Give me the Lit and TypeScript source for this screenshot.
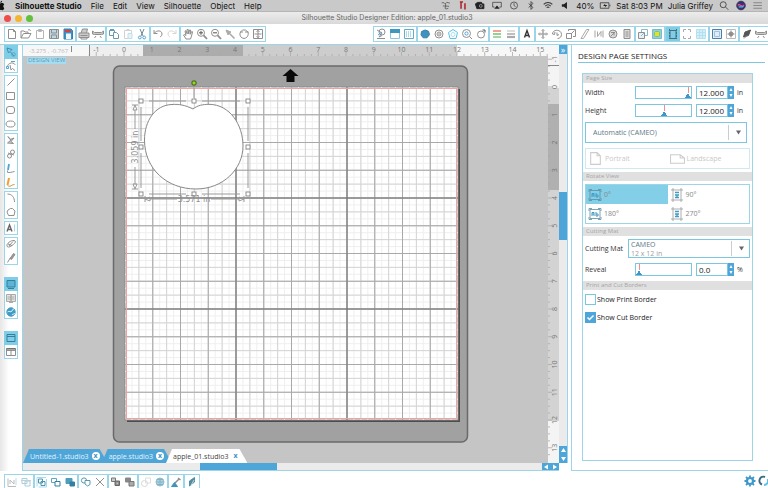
import { LitElement, html, svg, css } from "lit";
import { customElement, property } from "lit/decorators.js";
import { classMap } from "lit/directives/class-map.js";

const G = "#8f8f8f";
const B = "#4fa5d6";
const L = "#a9d9ec";

/* Every glyph is drawn on a 14 x 14 grid. */
const glyphs: Record<string, unknown> = {
  page: svg`<path d="M3.5 2.5h5l2 2v7h-7z M8.5 2.5v2h2"/>`,
  open: svg`<path d="M2 11V4h3l1 1h3v1.500M2 11l2.500-4.500H12L9.500 11z M9 3c1.500-1 2.500 0 2.500 1"/>`,
  blank: svg`<path d="M3.500 3.500h7v8h-7z M5.500 2.500h3v2h-3z" stroke="#b5b5b5"/>`,
  save: svg`<path d="M2.500 2.500h9v9h-9z" fill="#bcd8e4"/><path d="M4.500 2.500v3.500h5V2.500M4.500 11.500V8h5v3.500"/>`,
  sdcard: svg`<path d="M3 2h7l1.500 1.500V12H3z" fill="#3f8fc0" stroke="#3a7ea8"/><path d="M4 3h5.500v2H4z" fill="#e03a3a" stroke="none"/><path d="M5 6.500h5V12H5z" fill="#eef6fa" stroke="none"/>`,
  print: svg`<path d="M4 6l1.500-4h5L9.500 6M2 6h10v4.500H2z" fill="#ccc"/><path d="M3.500 8.500h7M4 10.500v1.500h6v-1.500"/>`,
  cutter: svg`<path d="M1.500 4l2 1.500h7l2-1.500v3l-2 .5h-7l-2-.5z" fill="#ccc"/><path d="M5 9l-1.500 2M9 9l1.500 2"/>`,
  copy: svg`<path d="M2.500 3.500h5v5h-5z" stroke="#6b98ad"/><path d="M6.500 5.500h3l2 2v4h-5z" fill="#fff" stroke="#6b98ad"/><path d="M3 2.500h4" stroke="${B}"/>`,
  paste: svg`<path d="M3.500 3.500h7v8h-7z M5.500 2.500h3" stroke="#d2d2d2"/><path d="M7 6.500h4v5H7z" fill="#e6f3f8" stroke="#c0dfe9"/>`,
  cut: svg`<path d="M5 2l3 7M9 2L6 9" stroke="#6f8793"/><circle cx="4.800" cy="10.500" r="1.400" stroke="${B}"/><circle cx="9.200" cy="10.500" r="1.400" stroke="${B}"/>`,
  undo: svg`<path d="M3 3v3.500h3.500M3 6.500c3-4 8-3 8 .5 0 1.500-1 2.500-2 3"/>`,
  redo: svg`<path d="M11 3v3.500H7.500M11 6.500C8 2.500 3 3.500 3 7c0 1.500 1 2.500 2 3" stroke="#d8d8d8"/>`,
  hand: svg`<path d="M5 12L2.500 8l1-.5L5 8.500 4 4l1-.3L6.200 7 6 2.500h1.200L7.700 7 8.500 3h1L9.300 7.300l1.500-3 .8.500L10.500 9 9.500 12z"/>`,
  zoomin: svg`<circle cx="6" cy="5.800" r="3.500"/><path d="M8.600 8.400L12 12" stroke-width="1.800"/><path d="M4 5.800h4M6 3.800v4" stroke="#555"/>`,
  zoomout: svg`<circle cx="6" cy="5.800" r="3.500"/><path d="M8.600 8.400L12 12" stroke-width="1.800"/><path d="M4 5.800h4" stroke="#555"/>`,
  zoomsel: svg`<path d="M3 3l2 5 1-2 2-1z" fill="#aaa" stroke="#aaa"/><path d="M6 6l5.500 5.500" stroke-width="1.600" stroke="#aaa"/>`,
  zoomdrag: svg`<path d="M7 11.500C4 11 2.500 9 3 6l1-1.500L5.500 3h3L11 5c.8 3-.5 6-4 6.500z M3 5h3M8 5h3.500"/>`,
  fit: svg`<path d="M2.500 2.500h9v9h-9z"/><path d="M7 3.500v7M3.500 7h7M5.500 4.500L7 3.500l1.500 1M5.500 9.500L7 10.500l1.500-1"/>`,
  lamp: svg`<circle cx="8" cy="5" r="3"/><path d="M3 3l5 3-3 4M3 11.500h8M5 10l3-1.500"/><path d="M4 8l4-3" stroke="${B}"/>`,
  window: svg`<path d="M2.500 2.500h9v9h-9z" stroke="#8ec6de"/><path d="M2 2h10v4H2z" fill="#3f97bd" stroke="none"/>`,
  dots: svg`<path d="M2.500 2.500h9v9h-9z" stroke="#63acc9"/><path d="M4 5h6M4 7h6M4 9h6" stroke="#63b4d6" stroke-dasharray="1 1"/>`,
  poly: svg`<path d="M7 3l3.500 1.200 1 3.500L9 10.800H5.200L3 8l.5-3.500z" fill="#3f94bf" stroke="#3a82a6"/>`,
  spiral: svg`<circle cx="7" cy="7" r="4"/><circle cx="7" cy="7" r="2"/><path d="M6 7h2"/>`,
  star: svg`<path d="M7 2.500l4.500 3-1.500 6H4l-1.500-6z" stroke="#5cc2e6"/><circle cx="7" cy="7.500" r="2" stroke="#a7dff2"/>`,
  zoomq: svg`<circle cx="6.500" cy="6.500" r="4"/><circle cx="6.500" cy="6.500" r="1.600" stroke="${B}"/><path d="M9.500 9.500l2.500 2.500"/>`,
  ring: svg`<circle cx="7" cy="7.500" r="3.500"/><path d="M8.500 3h2.500v2.500" stroke="#555"/>`,
  lines: svg`<path d="M3 4h8" stroke="#ef8a7c" stroke-width="1.600"/><path d="M3 7h8" stroke="#7cc576" stroke-width="1.600"/><path d="M3 10h8" stroke="#8fd08a" stroke-width="1.600"/>`,
  weights: svg`<path d="M3 4h8" stroke="#bbb"/><path d="M3 7h8" stroke="#aaa" stroke-width="1.500"/><path d="M3 10h8" stroke="#aaa" stroke-width="2.200"/>`,
  letter: svg`<path d="M4.500 10.500l2.500-7 2.500 7M5.500 8.500h3" stroke="#333" stroke-width="1.400"/>`,
  move: svg`<path d="M7 2.500v9M2.500 7h9" stroke="#a8a8a8" stroke-width="1.600"/><path d="M5.500 4L7 2.500 8.500 4M5.500 10L7 11.500 8.500 10M4 5.500L2.500 7 4 8.500M10 5.500L11.500 7 10 8.500" stroke="#a8a8a8"/>`,
  rotate: svg`<path d="M2.500 7c0-5 9-5 9 .5 0 2-1.500 4-4 4M2.500 7l2 .5L5 5M7 5.500v3l2-1"/>`,
  scale: svg`<path d="M2.500 6.500h5v5h-5z M4.500 4V2.500h7v7H9M7 7l3.500-3.500"/>`,
  shear: svg`<path d="M3 11.500L8.500 2.500H11L5.500 11.500z" stroke="#aaa"/>`,
  align: svg`<path d="M3 3.500v7M11 3.500v7M5.500 4.500v5l3.500-5v5" stroke="#a5a5a5"/>`,
  replicate: svg`<circle cx="7" cy="7" r="4" fill="#ddd"/><path d="M4.500 9.500l5-5M5 5.500h3v3"/>`,
  nest: svg`<path d="M4 2.500h6v9H4z" fill="#ddd"/><path d="M5.500 5h3M5.500 7h3M5.500 9h3"/>`,
  modify: svg`<path d="M2.500 5.500h6v6h-6z" fill="#e6f1f5"/><path d="M5.500 5V2.500h6v6H9M5 9l4-4" stroke="#8fb7c7"/>`,
  trace: svg`<path d="M2.500 2.500h9v9h-9z" fill="#8fd0e6" stroke="#7bb9ce"/><rect x="4.500" y="4.500" width="5" height="5" rx="1" fill="#e2e22c" stroke="#7cc576"/>`,
  pagecfg: svg`<path d="M4 3.500h6v8H4z" stroke="#47707f"/><path d="M3.500 2v10M10.500 2v10" stroke="#47707f" stroke-dasharray="2 1"/>`,
  reg: svg`<path d="M3.500 5V2.500H6M8 2.500h2.500V5M10.500 9v2.500H8M6 11.500H3.500V9" stroke="#aaa"/>`,
  gridic: svg`<path d="M2.500 2.500h9v9h-9z" fill="#d2eef8" stroke="#b4e0f0"/><path d="M5.500 2.500v9M8.500 2.500v9M2.500 5.500h9M2.500 8.500h9" stroke="#b4e0f0"/>`,
  media: svg`<path d="M2.500 2.500h9v9h-9z" fill="#dfeef8" stroke="#4d7da8"/><path d="M4.500 4.500h5v5h-5z" stroke="#9fc2dc"/>`,
  target: svg`<path d="M2.500 2.500h9v9h-9z" stroke="#bbb"/><circle cx="7" cy="7" r="2" fill="#888"/><path d="M7 3.500v7M3.500 7h7"/>`,
  knife: svg`<path d="M3.500 10l1.500-5 5.500-2-2 5.500z" fill="#555" stroke="#555"/><path d="M4 11.500l3-3"/>`,
  select: svg`<path d="M3 3l1.500 5 1.500-1.500L10 11M3 3l5 1.500L6.500 6" stroke="#3f8fae"/><circle cx="9.500" cy="9.500" r="1.800" stroke="#5aa6c4"/>`,
  nodes: svg`<path d="M3.500 8C3.500 3 11 3 11 6M6 6l1 5 1.500-1.500L11 11.500"/><path d="M2.500 7.500h2v2h-2z" fill="#fff" stroke="${B}"/><path d="M7 2.500h4" stroke="${B}"/>`,
  line: svg`<path d="M3.500 10.500l7-7"/>`,
  rect: svg`<path d="M2.500 3.500h8v7h-8z"/>`,
  rrect: svg`<rect x="2.500" y="3.500" width="8" height="7" rx="2.500"/>`,
  oval: svg`<ellipse cx="6.500" cy="7" rx="4.500" ry="3"/>`,
  polygon: svg`<path d="M4 3.500l2 3 4-1.500-3 3.500 2.500 2-6-.5L7 7z" fill="#ccc"/>`,
  curve: svg`<circle cx="8.500" cy="5" r="2"/><circle cx="5.500" cy="9" r="2"/><path d="M4 6l6 2"/>`,
  pen: svg`<path d="M4 9L5 3" stroke="${B}" stroke-width="1.800"/><path d="M3.500 9.500v1.800c2 .7 4.500-.3 7-.8"/>`,
  brush: svg`<path d="M3.500 10L5 3" stroke="#f0a030" stroke-width="2"/><path d="M3.500 10.500c3 2 4-1 7-1" stroke="#c98a3a"/>`,
  arc: svg`<path d="M3.500 3C8 3 10.500 6.500 10.500 11"/>`,
  penta: svg`<path d="M6.500 3.500h2L11 6l-1 4.500H4.500L3 7l1-2z"/>`,
  textic: svg`<path d="M3 10.500L5.500 4l2.500 6.500M4 8.500h3" stroke="#666" stroke-width="1.400"/><path d="M10.500 3.500v7" stroke="${L}"/>`,
  eraser: svg`<path d="M3 9c-1-2 4-6 7-5.500s1 3-2 5-4.500 2-5 .5z M5 9l4-4.500M4 7l4 1.500"/>`,
  blade: svg`<path d="M3.500 11.500l3-5"/><path d="M6 7.500L9.500 2.500 11 3.500 7.500 8.500z" fill="#999"/>`,
  design: svg`<path d="M3 3.500h8v6.500H3z" fill="#5db4d6" stroke="#357f9d"/><path d="M4 11.500h6" stroke="#357f9d"/>`,
  book: svg`<path d="M2.500 3.500H7v7H2.500z M7 3.500h4.500v7H7z" fill="#e4e4e4" stroke="#aaa"/><path d="M5 11.500h4M3.500 6h7M3.500 8h7" stroke="#aaa"/>`,
  store: svg`<circle cx="7" cy="7" r="4.200" fill="#3f9cc4" stroke="#3f9cc4"/><path d="M3.500 7c2-2 3 1 4.500-1s0-2 2-2M8 9.500c1.500 0 2-1 3-1" stroke="#dff2fa"/>`,
  split1: svg`<path d="M3 3.500h8v7H3z M3 5.500h8" stroke="#357f9d"/>`,
  split2: svg`<path d="M2.500 3.500h9v7h-9z M7 5.500v5M2.500 5.500h9"/><path d="M2.500 4h9" stroke="#555"/>`,
  group1: svg`<path d="M3 3.500v8M3 11.500h8M5 9V5l4 4V5" stroke="#bbb"/><path d="M11 3v7" stroke="#b9dce9"/>`,
  group2: svg`<path d="M3 3.500h5v5H3z M6 6h5v5H6z" stroke="#a5cfdf"/><path d="M2 5.500h10" stroke="#ccc"/>`,
  selall: svg`<path d="M3.500 4h4v4h-4z M6 6.500h4v4H6z" stroke="#4b93ae"/><path d="M2 2.500h9M2 2.500v9M11.500 4v8h-8" stroke="${L}"/>`,
  front: svg`<path d="M2.500 3.500h5v4h-5z" stroke="#5aa6c4"/><path d="M6 6.500h5v4.500H6z" fill="#fff" stroke="#357f9d"/>`,
  back: svg`<path d="M3 3.500h6v5H3z" fill="#4f9dbb" stroke="#4f9dbb"/><path d="M7 7h4.500v4H7z" fill="#357f9d" stroke="#357f9d"/>`,
  dup: svg`<circle cx="5" cy="5.500" r="2.600" stroke="#5c98b0"/><path d="M6 5.500h5v4L8.500 11 6 9z" fill="#fff" stroke="#5c98b0"/>`,
  del: svg`<path d="M3 3l8 8M11 3l-8 8"/>`,
  weld: svg`<path d="M2.500 3h4v3.500h-4z" fill="#ccc" stroke="#777"/><path d="M6 6h4.500v4.500H6z" fill="#888" stroke="#666"/><circle cx="8.200" cy="8.200" r="1" fill="#fff"/>`,
  sub: svg`<path d="M2.500 3h5v4h-5z" fill="#888" stroke="#888"/><path d="M6 6.500h5V11H6z" fill="#aaa" stroke="#777"/>`,
  fade: svg`<circle cx="5.500" cy="8.500" r="3" stroke="#d8d8d8"/><path d="M6.500 3h5v5h-5z" stroke="#dedede"/>`,
  globe: svg`<circle cx="7" cy="7" r="4" fill="#a9d3e3" stroke="#9fbcc7"/><path d="M7 3v8M3 7h8M4 4.500h6M4 9.500h6" stroke="#7fb4c8"/>`,
  dropper: svg`<path d="M2.500 11.500l3-4 3 4z" fill="#3f94bf" stroke="#3f94bf"/><path d="M6 8l4-4M9 3l2.500 2" stroke-width="1.500"/>`,
  leaf: svg`<path d="M4.500 11V6l5-3.500V7z" fill="#5f8797" stroke="#4a8fae"/><path d="M9 5L6 10.500" stroke="#b8dbe8"/>`,
  gear: svg`<circle cx="7" cy="7" r="3" stroke-width="2.200" stroke="#3d97cc"/><path d="M7 1.500v2M7 10.500v2M1.500 7h2M10.500 7h2M3 3l1.400 1.400M9.600 9.600L11 11M3 11l1.400-1.400M9.600 4.400L11 3" stroke="#3d97cc" stroke-width="1.800"/>`,
  refresh: svg`<path d="M8 3a4 4 0 0 0-3 7.500" stroke="#3a6d84" stroke-width="2"/><path d="M7 11a4 4 0 0 0 3.500-6" stroke="#5fc0e8" stroke-width="2"/>`,
  apple: svg`<path d="M7.500 4c2-1 4 0 4.500 1-1.500 1-1.500 3.500 0 4.500-1 2.500-2 3-4 2-2 1-3.500.5-4.500-2S3 3 7.500 4z M7.500 3.500c0-1.500 1-2.500 2-2.500 0 1.500-1 2.500-2 2.500z" fill="#111" stroke="none"/>`,
  bird: svg`<path d="M1.500 3.500h3L6 5l2-2 4 1M3 7.500l8 .5M5 10l2 1.500 3-1M6.500 5v5" stroke="#555"/>`,
  bars: svg`<path d="M4.500 2v9M9.500 4v8M3 2.500h4" stroke="#b3262b" stroke-width="2"/>`,
  camera: svg`<path d="M1 5l3-2h5l1 2h2v6H3z" fill="#222" stroke="#222"/><circle cx="8" cy="7.500" r="1.800" stroke="#aaa"/>`,
  airplay: svg`<path d="M4 9H1.500V3h11v6H10" stroke="#444"/><path d="M7 7l3.500 4h-7z" fill="#222" stroke="none"/>`,
  clock: svg`<circle cx="7" cy="7" r="4.500" stroke="#444"/><path d="M7 4v3l2 1.500" stroke="#444"/>`,
  bluetooth: svg`<path d="M4 4.500l5.500 5L7 12V2l2.500 2.500L4 9.500" stroke="#333"/>`,
  wifi: svg`<path d="M1.500 5.500c3-3 8-3 11 0M3.500 7.700c2-2 5-2 7 0M5.300 9.700c1-1 2.400-1 3.400 0" stroke="#333" stroke-width="1.300"/>`,
  volume: svg`<path d="M3 5.500h2.500L9.500 2.500v9L5.500 8.500H3z" fill="#222" stroke="none"/>`,
  battery: svg`<path d="M1 3.500h11v7H1z M13.300 6v2" stroke="#333"/><path d="M7.500 4.500l-3 3h3l-1 2.500 3.500-3.500H7z" fill="#222" stroke="none"/>`,
  search: svg`<circle cx="6" cy="6" r="3.800" stroke="#333"/><path d="M9 9l3.500 3.500" stroke="#333"/>`,
  siri: svg`<circle cx="7" cy="7" r="5.500" fill="#3b2d78" stroke="#2b2b40"/><path d="M3 7c2-4 5 4 8-1" stroke="#e05a9a" stroke-width="1.500"/><path d="M4 9c2-1 4 1 6-1" stroke="#4fc3e8" stroke-width="1.500"/>`,
  list: svg`<path d="M1 3.500h11M1 7h11M1 10.500h11" stroke="#777"/>`,
  p0: svg`<path d="M1 4V1.500h3M10 1.500h3V4M13 10v2.500h-3M4 12.500H1V10M2 2.500h10v9H2z" stroke="#5e8ea0" stroke-width=".8"/><path d="M4 9V5.500h2V9M4 7h2M8 5v4h2V7H8" stroke="#3f9cc4"/>`,
  p90: svg`<path d="M2 3V1h2M10 1h2v2M12 11v2h-2M4 13H2v-2M3 2h8v10H3z" stroke="#999" stroke-width=".8"/><path d="M5 4.500h4M5 7h4M5 9.500h4M7 7v2.500" stroke="#3f9cc4" stroke-width="1.300"/>`,
  sheet: svg`<path d="M2.500 1.500h6l3 3v8h-9z M8.500 1.500v3h3" stroke="#ccc"/>`,
  wide: svg`<path d="M.500 3.500h9l4 3v5h-13z M9.500 3.500v3h4" stroke="#ccc"/>`,
};

const icon = (name: string) =>
  html`<svg class="icon" viewBox="0 0 14 14" fill="none" stroke=${G} aria-hidden="true">${glyphs[name]}</svg>`;

const reset = css`
  *, *::before, *::after { box-sizing: border-box; }
  button { appearance: none; background: none; border: 0; margin: 0; padding: 0; font: inherit; color: inherit; display: grid; place-items: center; }
  .icon { display: block; width: 14px; height: 14px; flex: none; }
`;

@customElement("tool-group")
class ToolGroup extends LitElement {
  @property() icons = "";
  @property() active = "";
  @property({ type: Boolean, reflect: true }) vertical = false;
  static styles = [reset, css`
    :host { display: flex; flex: none; border: 1px solid #9dd5e8; background: #fff; }
    :host([vertical]) { flex-direction: column; border: 0; box-shadow: inset 0 0 0 1px #9dd5e8; }
    button { width: 14px; height: 14px; }
    .on { background: #7fcde6; }
  `];
  render() {
    return this.icons.split(" ").map((n) => html`
      <button type="button" aria-label=${n} class=${classMap({ on: this.active.split(" ").includes(n) })}>${icon(n)}</button>`);
  }
}

const INCH = 27.75;
const range = (a: number, b: number, step = 1) => {
  const out: number[] = [];
  for (let v = a; v <= b; v += step) out.push(v);
  return out;
};

/* Grid lines from faintest to darkest, so that the heavier ones lie on top. */
const gridLines: [number, string][] = [
  [0.25, "#efefef"],
  [0.5, "#d4d4d4"],
  [1, "#a9a9a9"],
  [4, "#6f6f6f"],
];

@customElement("design-canvas")
class DesignCanvas extends LitElement {
  static styles = [reset, css`
    :host { display: grid; grid-template: 11px minmax(0, 1fr) / minmax(0, 1fr) 11px; min-width: 0; min-height: 0; background: #c5c5c5; border-left: 1px solid #9dd5e8; font-family: "Open Sans", "Noto Sans", sans-serif; position: relative; }
    svg { display: block; width: 100%; height: 100%; }
    .top { grid-column: 1 / 3; background: #f7f7f7; }
    .num { font-size: 7px; fill: #777; text-anchor: middle; }
    .faint { font-size: 6px; fill: #b8b8b8; }
    .dim { font-size: 8px; fill: #8f8f8f; text-anchor: middle; font-family: "DejaVu Sans", sans-serif; }
    .view { position: absolute; left: 4px; top: 12px; background: #a7dbf0; color: #5b9db8; font-size: 6px; line-height: 7px; padding: 0 1px; }
    .tabs { position: absolute; left: 0; bottom: 0; display: flex; }
  `];
  render() {
    const size = INCH * 12;
    const mark = (i: number) => i * INCH;
    return html`
      <svg class="top" aria-label="Horizontal ruler">
        <rect x="66" width="54" height="11" fill="#efefef" />
        <rect x="120" width="314" height="11" fill="#cdcdcd" />
        <rect x="120" width="100" height="11" fill="#acacac" />
        <text class="faint" x="6" y="8">-3.275 , -0.767</text>
        <g transform="translate(101 0)" stroke="#aaa">
          ${range(-1.25, 15.25, 0.25).map((i) => svg`<path d="M${mark(i)} ${i % 1 === 0 ? 7 : 9}v4" stroke-width=".8"/>`)}
        </g>
        <path d="M66.500 0v11M48.500 1v6" stroke="#888" />
        <g transform="translate(101 7)">
          ${range(-1, 15).map((i) => svg`<text class="num" x=${mark(i)}>${i}</text>`)}
        </g>
      </svg>
      <svg aria-label="Cutting mat with apple outline">
        <g transform="translate(102 31)">
          <rect x="-11.500" y="-21" width="354" height="376" rx="6" fill="#a1a1a1" stroke="#6a6a6a" stroke-width="1.500" />
          <path d="M2 ${size + 1}H${size + 1}V2" fill="none" stroke="#4d4d4d" stroke-width="2" />
          <rect width=${size} height=${size} fill="#fff" stroke="#8a8a8a" />
          ${gridLines.map(([step, color]) => range(step, 12 - step, step).map((i) =>
            svg`<path d="M${mark(i)} 0V${size}M0 ${mark(i)}H${size}" stroke=${color}/>`))}
          <rect x="1.500" y="1.500" width=${size - 3} height=${size - 3} fill="none" stroke="#efa3a3" />
          <path d="M165.500-18l8 7h-4v6h-8v-6h-4z" fill="#0a0a0a" />
          <path d="M68 22C60 18 54 17 47 17.500C30 18 19.500 34 19.500 53C19.500 82 42 102 71 102C98 102 118 82 118 59C118 38 105 17.500 84 17.300C78 17.500 73 18 68 22Z" fill="#fff" stroke="#888" />
          <path d="M24 14H61M77 14H115M24 107H61M77 107H115M16 20V54M16 66V101M123 20V54M123 66V101M69-2V11" stroke="#999" />
          <path d="M20 109v6M119 109v6M20 112l5-2v4zM119 112l-5-2v4zM25 112H52M86 112H114M7 18h6M7 102h6M10 18l-2 5h4zM10 102l-2-5h4zM10 23V42M10 80V97" fill="none" stroke="#999" />
          ${[[16, 14], [69, 14], [123, 14], [16, 60], [123, 60], [16, 107], [69, 107], [123, 107]].map(([x, y]) =>
            svg`<rect x=${x - 2} y=${y - 2} width="4" height="4" fill="#fff" stroke="#777" stroke-width=".8"/>`)}
          <rect x="67" y="-6" width="4" height="4" rx="1" fill="#8fdc1e" stroke="#3c5a10" />
          <text class="dim" x="69" y="115">3.571 in</text>
          <text class="dim" transform="translate(13 60) rotate(-90)">3.059 in</text>
        </g>
      </svg>
      <svg aria-label="Vertical ruler">
        <rect width="11" height="100%" fill="#f4f4f4" />
        <rect y="32" width="11" height="333" fill="#d3d3d3" />
        <rect y="48" width="11" height="86" fill="#b0b0b0" />
        <g transform="translate(0 31)">
          ${range(-1, 13.25, 0.25).map((i) => svg`<path d="M0 ${mark(i)}h${i % 1 === 0 ? 4 : 2}" stroke="#aaa" stroke-width=".8"/>`)}
          ${range(-1, 13).map((i) => svg`<text class="num" transform="translate(9 ${mark(i)}) rotate(-90)">${i}</text>`)}
        </g>
        <path d="M0 9.500h11" stroke="#888" />
      </svg>
      <span class="view">DESIGN VIEW</span>
      <div class="tabs"><slot></slot></div>
    `;
  }
}

@customElement("doc-tab")
class DocTab extends LitElement {
  @property() name = "";
  @property({ type: Boolean, reflect: true }) active = false;
  static styles = [reset, css`
    :host { display: flex; align-items: center; height: 14px; padding: 0 8px 0 7px; gap: 3px; margin-right: -6px; background: #4ea6d8; color: #e4f3fb; clip-path: polygon(6px 0, calc(100% - 8px) 0, 100% 100%, 0 100%); font: 7px "Open Sans", "Noto Sans", sans-serif; }
    :host([active]) { background: #fff; color: #444; }
    .close { width: 8px; height: 8px; border-radius: 4px; background: #fff; color: #3f94c4; font-size: 7px; line-height: 8px; font-weight: 700; }
  `];
  render() {
    return html`<button type="button">${this.name}</button><button class="close" type="button" aria-label="Close ${this.name}">x</button>`;
  }
}

@customElement("page-settings")
class PageSettings extends LitElement {
  static styles = [reset, css`
    :host { display: flex; flex-direction: column; border: solid #9dd5e8; border-width: 0 0 1px 1px; background: #fff; padding: 5px 3px 9px 6px; color: #333; font: 7px/10px "Open Sans", "Noto Sans", sans-serif; }
    h1 { margin: 0; font-size: 8px; line-height: 12px; font-weight: 400; color: #222; border-bottom: 1px solid #7cc6e0; }
    .box { flex: 1; margin: 10px 12px 0 4px; border: 1px solid #9dd5e8; }
    h2 { margin: 0; height: 9px; padding-left: 3px; background: #e0e0e0; color: #a5a5a5; font-size: 6px; line-height: 9px; font-weight: 400; }
    .body { padding: 3px 2px; display: flex; flex-direction: column; gap: 5px; }
    .roomy { padding-bottom: 5px; }
    .row { display: flex; align-items: center; height: 13px; }
    .row > label { width: 50px; }
    .row.two { height: 19px; }
    .two > label { width: 43px; }
    input[type="range"] { appearance: none; width: 57px; height: 13px; margin: 0; border: 1px solid #7cc6e0; background: #fff; }
    input[type="range"]::-webkit-slider-thumb { appearance: none; width: 6px; height: 11px;
      background: linear-gradient(#ef8f86, #ef8f86) 3px 0 / 1px 6px no-repeat,
        linear-gradient(to bottom right, transparent 50%, #3d97cc 50%) 0 100% / 3px 5px no-repeat,
        linear-gradient(to bottom left, transparent 50%, #3d97cc 50%) 100% 100% / 3px 5px no-repeat; }
    .num { width: 32px; height: 13px; margin-left: 4px; padding: 0 2px; border: 1px solid #7cc6e0; font: inherit; font-size: 8px; color: #222; background: #fff; }
    .step { width: 6px; height: 13px; background: #4ea6d8; display: grid; }
    .step svg { width: 6px; height: 13px; display: block; }
    .unit { margin-left: 3px; }
    .pick { display: grid; flex: 1; position: relative; }
    .pick > * { grid-area: 1 / 1; }
    .body > .pick { margin-right: 3px; }
    select { appearance: none; width: 100%; height: 21px; border: 1px solid #7cc6e0; border-radius: 0; background: #fff; color: #5a7786; font: inherit; padding: 0 7px; }
    .two select { height: 19px; padding: 0 2px 8px; }
    .sub { align-self: end; padding: 0 3px; color: #a0a0a0; font-size: 7px; line-height: 9px; pointer-events: none; }
    .caret { justify-self: end; align-self: center; width: 19px; height: 15px; border-left: 1px solid #ccc; display: grid; place-items: center; color: #555; pointer-events: none; }
    .caret svg { width: 5px; height: 5px; }
    .orient { display: grid; grid-template-columns: 1fr 1fr; height: 21px; border: 1px solid #cfe8f2; color: #c8c8c8; }
    .orient .opt .icon { width: 15px; height: 15px; }
    .rotate { display: grid; grid-template-columns: 1fr 1fr; border: 1px solid #9dd5e8; height: 40px; color: #888; }
    .opt { display: flex; align-items: center; gap: 2px; padding-left: 2px; }
    .opt input { position: absolute; opacity: 0; margin: 0; }
    .opt:has(input:checked) { background: #83cfe8; }
    .check { display: flex; align-items: center; gap: 1px; height: 13px; color: #222; }
    .check input { appearance: none; width: 11px; height: 11px; margin: 0; border: 1px solid #7cc6e0; }
    .check input:checked { background: #4ea6d8; border-color: #4ea6d8; }
    .tick { display: grid; }
    .tick > * { grid-area: 1 / 1; }
    .tick svg { width: 11px; height: 11px; pointer-events: none; }
  `];
  private slider(id: string, label: string, pos: number, value: string, unit: string) {
    return html`<div class="row">
      <label for=${id}>${label}</label>
      <input type="range" aria-label="${label} slider" min="0" max="100" .value=${String(pos)} />
      <input class="num" id=${id} type="text" .value=${value} />
      <button class="step" type="button" aria-label="Step ${label}"><svg viewBox="0 0 6 13" fill="#fff"><path d="M3 2l1.500 3h-3zM3 11l1.500-3h-3z"/></svg></button>
      <span class="unit">${unit}</span>
    </div>`;
  }
  private caret = html`<span class="caret"><svg viewBox="0 0 6 5"><path d="M0 0h6L3 5z" fill="#666"/></svg></span>`;
  private option(name: string, label: string, glyph: string, checked = false, disabled = false) {
    return html`<label class="opt"><input type="radio" name=${name} ?checked=${checked} ?disabled=${disabled} />${icon(glyph)}<span>${label}</span></label>`;
  }
  render() {
    return html`
      <h1>DESIGN PAGE SETTINGS</h1>
      <div class="box">
        <h2>Page Size</h2>
        <div class="body">
          ${this.slider("w", "Width", 100, "12.000", "in")}
          ${this.slider("h", "Height", 50, "12.000", "in")}
          <div class="pick"><select aria-label="Page size"><option>Automatic (CAMEO)</option></select>${this.caret}</div>
          <div class="orient">${this.option("o", "Portrait", "sheet", false, true)}${this.option("o", "Landscape", "wide", false, true)}</div>
        </div>
        <h2>Rotate View</h2>
        <div class="body">
          <div class="rotate">
            ${this.option("r", "0°", "p0", true)}${this.option("r", "90°", "p90")}
            ${this.option("r", "180°", "p0")}${this.option("r", "270°", "p90")}
          </div>
        </div>
        <h2>Cutting Mat</h2>
        <div class="body roomy">
          <div class="row two">
            <label for="mat">Cutting Mat</label>
            <div class="pick"><select id="mat"><option>CAMEO</option></select><span class="sub">12 x 12 in</span>${this.caret}</div>
          </div>
          ${this.slider("rv", "Reveal", 0, "0.0", "%")}
        </div>
        <h2>Print and Cut Borders</h2>
        <div class="body">
          <label class="check"><input type="checkbox" />Show Print Border</label>
          <label class="check"><span class="tick"><input type="checkbox" checked /><svg viewBox="0 0 11 11" fill="none" stroke="#fff" stroke-width="1.500"><path d="M2.500 5.500l2 2 4-4"/></svg></span>Show Cut Border</label>
        </div>
      </div>
    `;
  }
}

@customElement("app-root")
class AppRoot extends LitElement {
  static styles = [reset, css`
    :host { display: flex; flex-direction: column; height: 100vh; overflow: hidden; background: #fff; font: 7px/10px "Open Sans", "Noto Sans", sans-serif; color: #222; }
    .menubar { display: flex; align-items: center; height: 12px; flex: none; background: #c9c9c9; padding-right: 4px; border-bottom: 1px solid #b5b5b5; color: #111; font-family: Inter, sans-serif; font-size: 8px; }
    .menus { display: flex; align-items: center; gap: 9px; }
    .menus > .icon { margin-left: -6px; width: 12px; height: 12px; }
    .brand { font-weight: 700; }
    .status { display: flex; align-items: center; gap: 5px; margin-left: auto; }
    .status .icon { width: 12px; height: 11px; }
    .title { display: flex; align-items: center; height: 12px; flex: none; background: linear-gradient(#ececec, #d9d9d9); color: #666; position: relative; justify-content: center; padding-left: 6px; font-family: Inter, sans-serif; }
    .lights { position: absolute; left: 4px; display: flex; gap: 4px; }
    .lights button { width: 7px; height: 7px; border-radius: 4px; }
    .red { background: #ee4e4a; } .amber { background: #f4b52e; } .green { background: #62c03c; }
    .tools { display: flex; flex: none; height: 21px; padding: 2px 0 0 4px; background: #fff; border-bottom: 1px solid #9dd5e8; align-items: flex-start; }
    .right { display: flex; margin-left: auto; }
    .right tool-group:last-child { border-right: 0; }
    .main { flex: 1; display: grid; min-height: 0; grid-template-columns: 22px minmax(0, 1fr) 9px 3px 197px; grid-template-rows: minmax(0, 1fr) 8px; }
    .side { display: flex; flex-direction: column; gap: 2px; padding-left: 4px; width: 18px; }
    .rail { grid-row: 1 / 3; grid-column: 1; background: linear-gradient(to right, #e6e6e6, #fff 9px); }
    .apart { margin-top: 10px; }
    .vbar { display: flex; flex-direction: column; background: #ebebeb; border-right: 1px solid #9dd5e8; }
    .vthumb { margin-top: 138px; height: 48px; background: #4ea6d8; }
    .more { height: 9px; background: #4ea6d8; color: #fff; font-size: 9px; line-height: 8px; }
    .arrows { margin-top: auto; height: 17px; background: #4ea6d8; }
    .arrows svg { display: block; width: 9px; height: 17px; }
    .hbar { grid-column: 2 / 3; display: flex; background: #ebebeb; border: solid #9dd5e8; border-width: 0 0 1px 1px; }
    .hthumb { margin-left: 33%; width: 77px; background: #4ea6d8; }
    .harrows { margin-left: auto; width: 17px; background: #4ea6d8; }
    .harrows svg { display: block; width: 17px; height: 8px; }
    page-settings { grid-column: 5; grid-row: 1 / 3; }
    .bottom { display: flex; align-items: flex-start; height: 17px; flex: none; padding: 3px 0 0 4px; }
    .corner { margin-left: auto; display: flex; margin-right: -3px; }
  `];
  render() {
    const menus = ["File", "Edit", "View", "Silhouette", "Object", "Help"];
    return html`
      <header class="menubar">
        <nav class="menus">${icon("apple")}<button class="brand" type="button">Silhouette Studio</button>
          ${menus.map((m) => html`<button type="button">${m}</button>`)}
        </nav>
        <div class="status">
          ${["bird", "bars", "camera", "airplay", "clock", "bluetooth", "wifi", "volume"].map(icon)}
          <span>40%</span>${icon("battery")}<span>Sat 8:03 PM</span><span>Julia Griffey</span>
          ${icon("search")}${icon("siri")}${icon("list")}
        </div>
      </header>
      <div class="title">
        <div class="lights"><button class="red" aria-label="Close"></button><button class="amber" aria-label="Minimise"></button><button class="green" aria-label="Zoom"></button></div>
        <span>Silhouette Studio Designer Edition: apple_01.studio3</span>
      </div>
      <div class="tools">
        ${["page open blank save sdcard", "print cutter", "copy paste cut", "undo redo", "hand zoomin zoomout zoomsel zoomdrag fit"].map((s) => html`<tool-group icons=${s}></tool-group>`)}
        <div class="right">
          ${["lamp window dots", "poly spiral star zoomq ring", "lines weights", "letter", "move rotate scale shear align replicate nest", "modify trace", "pagecfg reg gridic", "media target", "knife cutter"].map((s) => html`<tool-group icons=${s} active="pagecfg"></tool-group>`)}
        </div>
      </div>
      <div class="main">
        <div class="rail"><div class="side">
          <tool-group vertical icons="select nodes" active="select"></tool-group>
          <tool-group vertical icons="line rect rrect oval"></tool-group>
          <tool-group vertical icons="polygon curve pen brush"></tool-group>
          <tool-group vertical icons="arc penta"></tool-group>
          <tool-group vertical icons="textic"></tool-group>
          <tool-group vertical icons="eraser blade"></tool-group>
          <tool-group class="apart" vertical icons="design book store" active="design"></tool-group>
          <tool-group class="apart" vertical icons="split1 split2" active="split1"></tool-group>
        </div></div>
        <design-canvas>
          <doc-tab name="Untitled-1.studio3"></doc-tab>
          <doc-tab name="apple.studio3"></doc-tab>
          <doc-tab name="apple_01.studio3" active></doc-tab>
        </design-canvas>
        <div class="vbar">
          <button class="more" type="button" aria-label="Collapse panel">»</button>
          <div class="vthumb"></div>
          <button class="arrows" type="button" aria-label="Scroll vertically"><svg viewBox="0 0 9 17" fill="#fff"><path d="M4.500 2l2.500 4h-5zM4.500 15l2.500-4h-5z"/></svg></button>
        </div>
        <div class="hbar">
          <div class="hthumb"></div>
          <button class="harrows" type="button" aria-label="Scroll horizontally"><svg viewBox="0 0 17 8" fill="#fff"><path d="M2 4l4-2.500v5zM15 4l-4-2.500v5z"/></svg></button>
        </div>
        <page-settings></page-settings>
      </div>
      <footer class="bottom">
        ${["group1 group2", "selall front back", "dup del", "weld sub", "fade globe", "dropper", "leaf"].map((s) => html`<tool-group icons=${s}></tool-group>`)}
        <div class="corner"><button type="button" aria-label="Preferences">${icon("gear")}</button><button type="button" aria-label="Refresh">${icon("refresh")}</button></div>
      </footer>
    `;
  }
}
